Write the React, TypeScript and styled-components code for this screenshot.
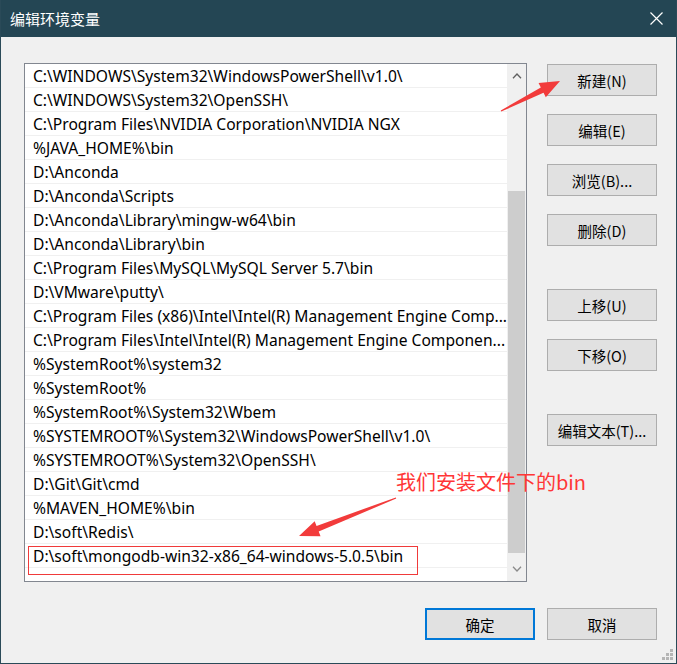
import React from "react";
import styled, { createGlobalStyle } from "styled-components";

const GlobalStyle = createGlobalStyle`
  html, body {
    margin: 0;
    padding: 0;
    background: #f0f0f0;
  }
  * {
    box-sizing: border-box;
  }
`;

const paths = [
  "C:\\WINDOWS\\System32\\WindowsPowerShell\\v1.0\\",
  "C:\\WINDOWS\\System32\\OpenSSH\\",
  "C:\\Program Files\\NVIDIA Corporation\\NVIDIA NGX",
  "%JAVA_HOME%\\bin",
  "D:\\Anconda",
  "D:\\Anconda\\Scripts",
  "D:\\Anconda\\Library\\mingw-w64\\bin",
  "D:\\Anconda\\Library\\bin",
  "C:\\Program Files\\MySQL\\MySQL Server 5.7\\bin",
  "D:\\VMware\\putty\\",
  "C:\\Program Files (x86)\\Intel\\Intel(R) Management Engine Comp...",
  "C:\\Program Files\\Intel\\Intel(R) Management Engine Componen...",
  "%SystemRoot%\\system32",
  "%SystemRoot%",
  "%SystemRoot%\\System32\\Wbem",
  "%SYSTEMROOT%\\System32\\WindowsPowerShell\\v1.0\\",
  "%SYSTEMROOT%\\System32\\OpenSSH\\",
  "D:\\Git\\Git\\cmd",
  "%MAVEN_HOME%\\bin",
  "D:\\soft\\Redis\\",
  "D:\\soft\\mongodb-win32-x86_64-windows-5.0.5\\bin"
];

const sideButtons = [
  { label: "新建(N)", space: 0 },
  { label: "编辑(E)", space: 18 },
  { label: "浏览(B)...", space: 18 },
  { label: "删除(D)", space: 18 },
  { label: "上移(U)", space: 43 },
  { label: "下移(O)", space: 18 },
  { label: "编辑文本(T)...", space: 43 }
];

const WindowStyled = styled.div`
  position: relative;
  width: 677px;
  height: 664px;
  display: flex;
  flex-direction: column;
  background: #f0f0f0;
  border: 1px solid #2a4a58;
  border-top: none;
  font-family: "Noto Sans", "Noto Sans CJK SC", sans-serif;
  color: #000;
  overflow: hidden;
`;

const TitleBarStyled = styled.div`
  height: 37px;
  flex: none;
  display: flex;
  align-items: center;
  justify-content: space-between;
  margin: 0 -1px;
  padding: 0 14px 0 10px;
  background: #244654;
  color: #fff;
  font-family: "Noto Sans CJK SC", sans-serif;
  font-size: 15px;
`;

const CloseIcon = () => (
  <svg width="13" height="13" viewBox="0 0 13 13">
    <path d="M0.5 0.5 L12.5 12.5 M12.5 0.5 L0.5 12.5" stroke="#fff" strokeWidth="1.2" />
  </svg>
);

const BodyStyled = styled.div`
  display: flex;
  gap: 20px;
  padding: 26px 0 0 23px;
`;

const ListBoxStyled = styled.div`
  width: 503px;
  height: 519px;
  display: flex;
  background: #fff;
  border: 1px solid #828790;
`;

const RowsStyled = styled.div`
  flex: 1;
  display: flex;
  flex-direction: column;
  overflow: hidden;
`;

const RowStyled = styled.div`
  height: 24px;
  flex: none;
  display: flex;
  align-items: center;
  padding: 1px 0 0 8px;
  border-bottom: 1px solid #f0f0f0;
  font-size: 15.6px;
  white-space: nowrap;
  overflow: hidden;
`;

const ScrollTrackStyled = styled.div`
  width: 19px;
  flex: none;
  display: flex;
  flex-direction: column;
  background: #f0f0f0;
`;

const ScrollArrowStyled = styled.div<{ $dim?: boolean }>`
  height: 24px;
  flex: none;
  display: flex;
  align-items: center;
  justify-content: center;
  color: ${(p) => (p.$dim ? "#8a8a8a" : "#606060")};
`;

const ScrollSpaceStyled = styled.div<{ $size: number }>`
  height: ${(p) => p.$size}px;
  flex: none;
`;

const ThumbStyled = styled.div`
  flex: 1;
  margin: 0 1px;
  background: #cdcdcd;
`;

const Chevron = ({ up }: { up?: boolean }) => (
  <svg width="10" height="6" viewBox="0 0 10 6">
    <path
      d={up ? "M1 5.2 L5 1 L9 5.2" : "M1 0.8 L5 5 L9 0.8"}
      fill="none"
      stroke="currentColor"
      strokeWidth="1.3"
    />
  </svg>
);

const SideStyled = styled.div`
  display: flex;
  flex-direction: column;
  padding-top: 1px;
`;

const ButtonStyled = styled.button<{ $space?: number; $primary?: boolean }>`
  width: 110px;
  height: 32px;
  margin-top: ${(p) => p.$space || 0}px;
  padding: 0;
  background: #e1e1e1;
  border: ${(p) => (p.$primary ? "2px solid #0078d7" : "1px solid #adadad")};
  font-family: "Noto Sans CJK SC", sans-serif;
  font-size: 14.5px;
  color: #000;
`;

const FooterStyled = styled.div`
  display: flex;
  justify-content: flex-end;
  gap: 12px;
  padding: 26px 19px 0 0;
`;

const NoteStyled = styled.div`
  position: absolute;
  left: 395px;
  top: 470px;
  color: #ff3636;
  font-family: "Noto Sans CJK SC", sans-serif;
  font-size: 20px;
  line-height: 24px;
  white-space: nowrap;
`;

const FrameStyled = styled.div`
  position: absolute;
  left: 27px;
  top: 546px;
  width: 390px;
  height: 29px;
  border: 1px solid #f03a3a;
`;

const OverlayStyled = styled.svg`
  position: absolute;
  left: 0;
  top: 0;
  pointer-events: none;
`;

const GripStyled = styled.svg`
  position: absolute;
  right: 2px;
  bottom: 2px;
`;

const Arrow = ({ x1, y1, x2, y2 }: { x1: number; y1: number; x2: number; y2: number }) => {
  const dx = x2 - x1;
  const dy = y2 - y1;
  const len = Math.hypot(dx, dy);
  const ux = dx / len;
  const uy = dy / len;
  const px = -uy;
  const py = ux;
  const head = 20;
  const bx = x2 - ux * head;
  const by = y2 - uy * head;
  const shaft = [
    `${x1 + px * 0.6},${y1 + py * 0.6}`,
    `${bx + px * 3},${by + py * 3}`,
    `${bx + px * 8},${by + py * 8}`,
    `${x2},${y2}`,
    `${bx - px * 8},${by - py * 8}`,
    `${bx - px * 3},${by - py * 3}`,
    `${x1 - px * 0.6},${y1 - py * 0.6}`
  ].join(" ");
  return <polygon points={shaft} fill="#f23b3b" />;
};

const App = () => (
  <>
    <GlobalStyle />
    <WindowStyled>
      <TitleBarStyled>
        <span>编辑环境变量</span>
        <CloseIcon />
      </TitleBarStyled>
      <BodyStyled>
        <ListBoxStyled>
          <RowsStyled>
            {paths.map((p) => (
              <RowStyled key={p}>{p}</RowStyled>
            ))}
          </RowsStyled>
          <ScrollTrackStyled>
            <ScrollArrowStyled>
              <Chevron up />
            </ScrollArrowStyled>
            <ScrollSpaceStyled $size={103} />
            <ThumbStyled />
            <ScrollSpaceStyled $size={4} />
            <ScrollArrowStyled $dim>
              <Chevron />
            </ScrollArrowStyled>
          </ScrollTrackStyled>
        </ListBoxStyled>
        <SideStyled>
          {sideButtons.map((b) => (
            <ButtonStyled key={b.label} $space={b.space}>
              {b.label}
            </ButtonStyled>
          ))}
        </SideStyled>
      </BodyStyled>
      <FooterStyled>
        <ButtonStyled $primary>确定</ButtonStyled>
        <ButtonStyled>取消</ButtonStyled>
      </FooterStyled>

      <NoteStyled>我们安装文件下的bin</NoteStyled>
      <FrameStyled />
      <OverlayStyled width="677" height="664">
        <Arrow x1={500} y1={111} x2={559} y2={81} />
        <Arrow x1={395} y1={498} x2={298} y2={536} />
      </OverlayStyled>
      <GripStyled width="12" height="12" viewBox="0 0 12 12">
        <rect x="8" y="0" width="3" height="3" fill="#b5b5b5" />
        <rect x="4" y="4" width="3" height="3" fill="#b5b5b5" />
        <rect x="8" y="4" width="3" height="3" fill="#b5b5b5" />
        <rect x="0" y="8" width="3" height="3" fill="#b5b5b5" />
        <rect x="4" y="8" width="3" height="3" fill="#b5b5b5" />
        <rect x="8" y="8" width="3" height="3" fill="#b5b5b5" />
      </GripStyled>
    </WindowStyled>
  </>
);

export default App;
